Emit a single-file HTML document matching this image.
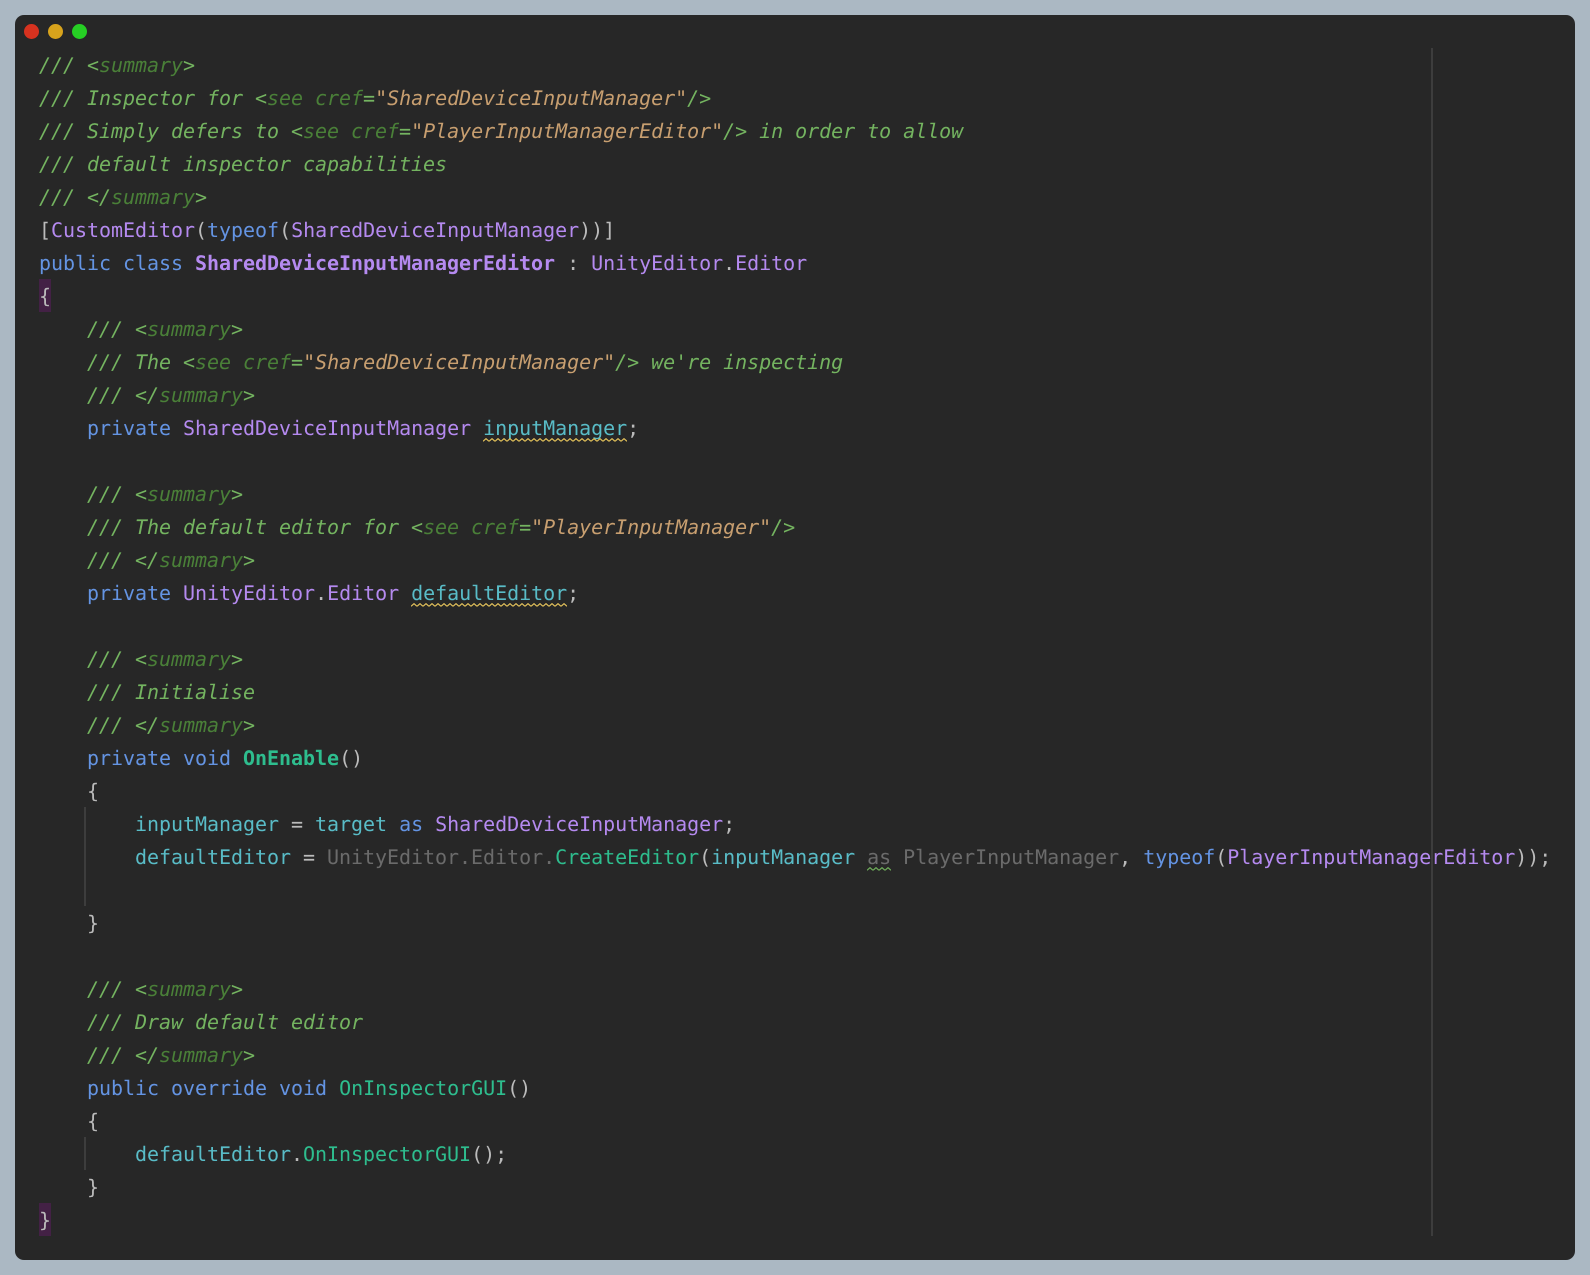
<!DOCTYPE html>
<html><head><meta charset="utf-8"><style>
html,body{margin:0;padding:0;width:1590px;height:1275px;background:#abb8c3;overflow:hidden}
#card{position:absolute;left:15px;top:15px;width:1560px;height:1245px;background:#272727;border-radius:9px}
.d{position:absolute;top:24px;width:15px;height:15px;border-radius:50%}
pre{position:absolute;left:39px;top:49px;margin:0;font:20px/33px "DejaVu Sans Mono","Liberation Mono",monospace;letter-spacing:-.04px;color:#bbbbbb;white-space:pre;text-rendering:geometricPrecision}
.c{font-style:italic;color:#74b460}.t{font-style:italic;color:#4a8038}.s{font-style:italic;color:#c89f70}
.k{color:#6494e3}.p{color:#b58af0}.b{font-weight:bold}.v{color:#59bcc7}.m{color:#2ebd8e}.g{color:#6b6b6b}
.h{position:absolute;left:39px;width:12px;height:33px;background:#432145}
.r{position:absolute;background:#3d3d3d;width:2px}
svg{position:absolute}
</style></head><body>
<div id="card"></div>
<div class="d" style="left:24px;background:#d7321f"></div>
<div class="d" style="left:48px;background:#d8a31c"></div>
<div class="d" style="left:72px;background:#26cf24"></div>
<div class="h" style="top:279px"></div>
<div class="h" style="top:1203px"></div>
<pre><span class="c">/// &lt;</span><span class="t">summary</span><span class="c">&gt;</span>
<span class="c">/// Inspector for &lt;</span><span class="t">see cref</span><span class="c">=</span><span class="s">"SharedDeviceInputManager"</span><span class="c">/&gt;</span>
<span class="c">/// Simply defers to &lt;</span><span class="t">see cref</span><span class="c">=</span><span class="s">"PlayerInputManagerEditor"</span><span class="c">/&gt; in order to allow</span>
<span class="c">/// default inspector capabilities</span>
<span class="c">/// &lt;/</span><span class="t">summary</span><span class="c">&gt;</span>
[<span class="p">CustomEditor</span>(<span class="k">typeof</span>(<span class="p">SharedDeviceInputManager</span>))]
<span class="k">public class</span> <span class="p b">SharedDeviceInputManagerEditor</span> : <span class="p">UnityEditor</span>.<span class="p">Editor</span>
{
    <span class="c">/// &lt;</span><span class="t">summary</span><span class="c">&gt;</span>
    <span class="c">/// The &lt;</span><span class="t">see cref</span><span class="c">=</span><span class="s">"SharedDeviceInputManager"</span><span class="c">/&gt; we're inspecting</span>
    <span class="c">/// &lt;/</span><span class="t">summary</span><span class="c">&gt;</span>
    <span class="k">private</span> <span class="p">SharedDeviceInputManager</span> <span class="v">inputManager</span>;

    <span class="c">/// &lt;</span><span class="t">summary</span><span class="c">&gt;</span>
    <span class="c">/// The default editor for &lt;</span><span class="t">see cref</span><span class="c">=</span><span class="s">"PlayerInputManager"</span><span class="c">/&gt;</span>
    <span class="c">/// &lt;/</span><span class="t">summary</span><span class="c">&gt;</span>
    <span class="k">private</span> <span class="p">UnityEditor</span>.<span class="p">Editor</span> <span class="v">defaultEditor</span>;

    <span class="c">/// &lt;</span><span class="t">summary</span><span class="c">&gt;</span>
    <span class="c">/// Initialise</span>
    <span class="c">/// &lt;/</span><span class="t">summary</span><span class="c">&gt;</span>
    <span class="k">private void</span> <span class="m b">OnEnable</span>()
    {
        <span class="v">inputManager</span> = <span class="v">target</span> <span class="k">as</span> <span class="p">SharedDeviceInputManager</span>;
        <span class="v">defaultEditor</span> = <span class="g">UnityEditor.Editor.</span><span class="m">CreateEditor</span>(<span class="v">inputManager</span> <span class="g">as PlayerInputManager</span>, <span class="k">typeof</span>(<span class="p">PlayerInputManagerEditor</span>));

    }

    <span class="c">/// &lt;</span><span class="t">summary</span><span class="c">&gt;</span>
    <span class="c">/// Draw default editor</span>
    <span class="c">/// &lt;/</span><span class="t">summary</span><span class="c">&gt;</span>
    <span class="k">public override void</span> <span class="m">OnInspectorGUI</span>()
    {
        <span class="v">defaultEditor</span>.<span class="m">OnInspectorGUI</span>();
    }
}</pre>
<div class="r" style="left:1431px;top:48px;height:1188px"></div>
<div class="r" style="left:84px;top:807px;height:99px"></div>
<div class="r" style="left:84px;top:1137px;height:33px"></div>
<svg width="1590" height="1275" style="left:0;top:0">
<defs>
<pattern id="w" x="483" width="6" height="4" patternUnits="userSpaceOnUse"><path d="M0 3.3L3 .7L6 3.3" fill="none" stroke="#e3c15a" stroke-width="1.2"/></pattern>
<pattern id="w1" x="411" width="6" height="4" patternUnits="userSpaceOnUse"><path d="M0 3.3L3 .7L6 3.3" fill="none" stroke="#e3c15a" stroke-width="1.2"/></pattern>
<pattern id="w2" x="867" width="6" height="4" patternUnits="userSpaceOnUse"><path d="M0 3.3L3 .7L6 3.3" fill="none" stroke="#6fb05a" stroke-width="1.2"/></pattern>
</defs>
<g transform="translate(0,438)"><rect x="483" y="0" width="144" height="4" fill="url(#w)"/></g>
<g transform="translate(0,603)"><rect x="411" y="0" width="156" height="4" fill="url(#w1)"/></g>
<g transform="translate(0,867)"><rect x="867" y="0" width="24" height="4" fill="url(#w2)"/></g>
</svg>
</body></html>
